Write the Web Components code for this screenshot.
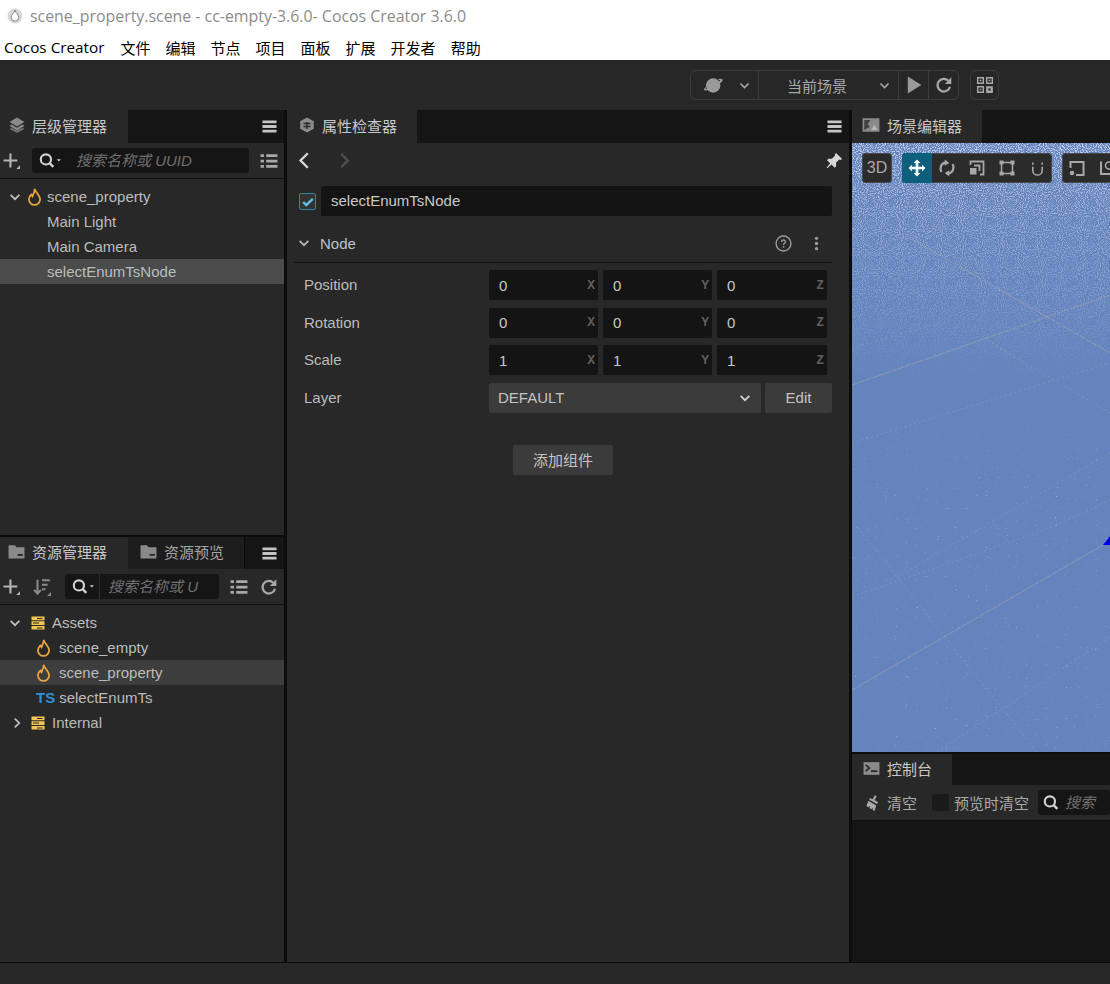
<!DOCTYPE html>
<html lang="zh">
<head>
<meta charset="utf-8">
<title>scene_property.scene - cc-empty-3.6.0- Cocos Creator 3.6.0</title>
<style>
  html, body { margin: 0; height: 100%; overflow: hidden; background: #282828; }
  body { font: 15px "Liberation Sans", "Noto Sans CJK SC", sans-serif; color: #c6c6c6; }
  cocos-app { width: 1110px; height: 984px; }
</style>
</head>
<body>
<cocos-app></cocos-app>

<script>
// icon shapes, all on a 16 unit box
const ICONS = {
  layers: '<path fill="currentColor" d="M8 .5 15.5 5 8 9.5.5 5z"/><path fill="currentColor" d="M2.6 7.6.5 9 8 13.5 15.5 9l-2.1-1.4L8 10.8z"/><path fill="currentColor" d="M2.6 11 .5 12 8 15.8 15.5 12l-2.1-1L8 13.8z" opacity=".8"/>',
  cube: '<path fill="currentColor" d="M8 .5l6.8 3.8v7.4L8 15.5 1.2 11.7V4.3z"/><path fill="none" stroke="#282828" stroke-width="1.3" d="M8 5v7M4.500 6.500h7M4.500 9.500h7"/>',
  menu: '<path fill="currentColor" d="M.5 1.5h15v3H.5zM.5 6.5h15v3H.5zM.5 11.5h15v3H.5z"/>',
  plus: '<path fill="none" stroke="currentColor" stroke-width="2" d="M7 1.5v13M.5 8h13"/><path fill="currentColor" d="M16 12.5V16h-3.5z"/>',
  search: '<circle cx="6.500" cy="7" r="4.800" fill="none" stroke="currentColor" stroke-width="2"/><path stroke="currentColor" stroke-width="2.200" d="M10 10.500l3.500 3.500"/>',
  caret: '<path fill="currentColor" d="M2 5h9L6.500 10z"/>',
  list: '<path fill="currentColor" d="M.5 2h3v2.500h-3zM5.500 2h10v2.500h-10zM.5 6.800h3v2.500h-3zM5.500 6.800h10v2.500h-10zM.5 11.500h3V14h-3zM5.500 11.500h10V14h-10z"/>',
  down: '<path fill="none" stroke="currentColor" stroke-width="2" d="M3 5.500l5 5 5-5"/>',
  right: '<path fill="none" stroke="currentColor" stroke-width="2" d="M5.500 3l5 5-5 5"/>',
  back: '<path fill="none" stroke="currentColor" stroke-width="1.800" d="M10.500 2.500 5 8l5.500 5.500"/>',
  flame: '<path fill="none" stroke="currentColor" stroke-width="1.500" d="M8.200 1.500c.2 2.800 4.500 5.300 4.500 8.900a4.700 4.700 0 0 1-9.400 0c0-1.900 1-3.200 2.100-4.100l.9 1.500c1-1.900 2-3.800 1.900-6.300z"/>',
  folder: '<path fill="currentColor" d="M.5 2h6L8 4h7.500v10.500H.5z"/><path fill="#2a2a2a" d="M9 10.300h5v1.800H9z"/>',
  db: '<path fill="currentColor" d="M1.500 1.500h13v3.700h-13zM1.500 6.200h13v3.700h-13zM1.500 10.900h13v3.700h-13z"/><path fill="#282828" d="M7 3h5.500v1H7zM3 7.600h6v1H3zM7 12.400h5.500v1H7z"/>',
  sort: '<path fill="none" stroke="currentColor" stroke-width="1.800" d="M4 1.500V14M1 10.500 4 14l3-3.500M8 2h7M8 6h5M8 10h3"/><path fill="currentColor" d="M16 12.500V16h-3.500z"/>',
  refresh: '<path fill="none" stroke="currentColor" stroke-width="2" d="M13.300 9.500a5.600 5.600 0 1 1-1.500-5.300"/><path fill="currentColor" d="M14.500 1v6H8.800z"/>',
  pin: '<path fill="currentColor" d="M9.800.8 15.200 6.200l-1.500.8-1-.3-2.900 2.900.1 3-1.300 1.300-2.800-2.800L2 14.400l-.6-.4 3.200-3.900-2.800-2.800 1.300-1.300 3 .1 2.900-2.900-.2-1z"/>',
  help: '<circle cx="8" cy="8" r="7" fill="none" stroke="currentColor" stroke-width="1.300"/><path fill="none" stroke="currentColor" stroke-width="1.300" d="M6.200 6.500c0-2.300 3.600-2.300 3.600-.2 0 1.400-1.800 1.400-1.800 3"/><path fill="currentColor" d="M7.300 10.600h1.400V12H7.300z"/>',
  dots: '<circle cx="8" cy="2.500" r="1.800" fill="currentColor"/><circle cx="8" cy="8" r="1.800" fill="currentColor"/><circle cx="8" cy="13.500" r="1.800" fill="currentColor"/>',
  check: '<path fill="none" stroke="currentColor" stroke-width="2.800" d="M2.500 8l3.500 3.500L13.500 4.500"/>',
  planet: '<circle cx="8.500" cy="8" r="5.500" fill="currentColor"/><path fill="currentColor" d="M15.800 3.200c.6 1-2 3.500-6 5.800s-7.600 3.400-8.200 2.400c-.3-.5.2-1.300 1.200-2.300l.3.800c-.3.300-.4.500-.3.600.3.500 3-.5 6-2.300s5.100-3.700 4.800-4.200c0-.1-.3-.2-.7-.1l-.8-.6c1.400-.4 2.400-.5 2.700-.1z"/>',
  play: '<path fill="currentColor" d="M2.500 .5 14.500 8l-12 7.500z"/>',
  qr: '<path fill="none" stroke="currentColor" stroke-width="1.300" d="M1.500 1.500h5v5h-5zM9.500 1.500h5v5h-5zM1.500 9.500h5v5h-5z"/><path fill="currentColor" d="M3.300 3.300h1.400v1.400H3.300zM11.300 3.300h1.400v1.400h-1.400zM3.300 11.300h1.400v1.400H3.300zM9 9h6v6H9z"/><path fill="#272727" d="M11 11h2v2h-2z"/>',
  scene: '<path fill="currentColor" d="M.5 2h15v12H.5z"/><path fill="#282828" d="M2 3.500h5.500L5 7l2 2.500-5 3z" opacity=".75"/><path fill="#d0d0d0" d="M8 12.500l3-5 3 5z" opacity=".6"/>',
  console: '<path fill="currentColor" d="M.5 2h15v12H.5z"/><path fill="none" stroke="#282828" stroke-width="1.500" d="M2.500 4.500 6 7.500l-3.500 3M7.500 10.500h6"/>',
  broom: '<path fill="currentColor" d="M10.500 1l1.700 1-2 3.300 3.300 2-1 1.500L5.500 5l1-1.500 2 1.200zM4.800 6l7 4.200-1.500 4.800-1.800-1 .2-2-1.300 1.500-1.600-1 .5-1.800-1.500 1-1.800-1.100z"/>',
  move: '<path fill="currentColor" d="M8 .5l3 3H9.200v3.300h3.300V5l3 3-3 3v-1.800H9.200v3.300H11l-3 3-3-3h1.800V9.200H3.500V11l-3-3 3-3v1.800h3.300V3.500H5z"/>',
  rotate: '<path fill="none" stroke="currentColor" stroke-width="2" d="M3 11.500C1 8 3 3.500 7 3M13 4.500c2 3.500 0 8-4 8.500"/><path fill="currentColor" d="M6 .5l4 3-4 2.500zM10 15.500l-4-3 4-2.500z"/>',
  scale: '<path fill="none" stroke="currentColor" stroke-width="1.800" d="M1.500 5V1.500h13v13H11M5 5.500h5.500V11"/><path fill="currentColor" d="M1 8h6.500v6.500H1z"/>',
  rect: '<path fill="none" stroke="currentColor" stroke-width="1.500" d="M2.500 2.500h11v11h-11z"/><path fill="currentColor" d="M.5.500h4v4h-4zM11.500.500h4v4h-4zM.5 11.500h4v4h-4zM11.500 11.500h4v4h-4z"/>',
  magnet: '<path fill="none" stroke="currentColor" stroke-width="1.700" d="M3 6v4a5 5 0 0 0 10 0V6M3 1.500v2.500M13 1.500v2.500"/>',
  anchor: '<path fill="none" stroke="currentColor" stroke-width="2" d="M1.500 8V2h13v13H7"/><circle cx="3" cy="13" r="2.300" fill="currentColor"/>',
  local: '<path fill="none" stroke="currentColor" stroke-width="2" d="M2 1.500V14h13"/><circle cx="10" cy="5.500" r="3.500" fill="none" stroke="currentColor" stroke-width="1.500"/>',
  logo: '<circle cx="8" cy="8" r="7.500" fill="#d8d8d8"/><path fill="#fff" stroke="#8a8a8a" d="M8 2c.5 3 3.800 4.600 3.800 7.400a3.800 3.800 0 0 1-7.600 0C4.200 6.600 7.500 5 8 2z"/>'
};

// small helper so every element sets up its shadow root the same way
function shadow(el, html) {
  el.attachShadow({ mode: 'open' });
  el.shadowRoot.innerHTML = html;
}

class UiIcon extends HTMLElement {
  connectedCallback() {
    const size = this.getAttribute('size') || 16;
    const color = this.getAttribute('color') || '#a8a8a8';
    shadow(this, `
      <style>
        :host { display: inline-flex; flex: none; width: ${size}px; height: ${size}px; color: ${color}; }
        svg { width: 100%; height: 100%; display: block; overflow: visible; }
      </style>
      <svg viewBox="0 0 16 16">${ICONS[this.getAttribute('name')] || ''}</svg>`);
  }
}

class TitleBar extends HTMLElement {
  connectedCallback() {
    shadow(this, `
      <style>
        :host { display: block; background: #fff; color: #000; }
        .title { height: 30px; display: flex; align-items: center; gap: 7px; padding: 2px 0 0 7px; box-sizing: border-box; color: #8c8c8c; font: 15.9px "Open Sans", sans-serif; }
        .menu { height: 30px; display: flex; align-items: center; gap: 15px; padding: 4px 0 0 4px; box-sizing: border-box; font: 15px "Open Sans", "Noto Sans CJK SC", sans-serif; }
        .app { font-size: 15.3px; margin-right: 1px; }
      </style>
      <div class="title"><ui-icon name="logo"></ui-icon><span>scene_property.scene - cc-empty-3.6.0- Cocos Creator 3.6.0</span></div>
      <div class="menu">
        <span class="app">Cocos Creator</span><span>文件</span><span>编辑</span><span>节点</span><span>项目</span><span>面板</span><span>扩展</span><span>开发者</span><span>帮助</span>
      </div>`);
  }
}

class MainToolbar extends HTMLElement {
  connectedCallback() {
    shadow(this, `
      <style>
        :host { display: flex; height: 50px; box-sizing: border-box; padding: 10px 0 10px 690px; gap: 11px; background: #272727; font-size: 15px; color: #a9a9a9; }
        .group { display: flex; height: 30px; box-sizing: border-box; border: 1px solid #3c3c3c; border-radius: 6px; }
        .seg { display: flex; align-items: center; justify-content: center; box-sizing: border-box; border-left: 1px solid #3c3c3c; height: 100%; }
        .seg:first-child { border-left: 0; }
        .planet { width: 67px; gap: 15px; padding-left: 11px; justify-content: flex-start; }
        .current { width: 140px; padding: 0 7px 0 28px; justify-content: space-between; }
        .btn { width: 30px; }
        .qr { width: 27px; }
      </style>
      <div class="group">
        <div class="seg planet"><ui-icon name="planet" size="21" color="#9a9a9a"></ui-icon><ui-icon name="down" size="13"></ui-icon></div>
        <div class="seg current"><span>当前场景</span><ui-icon name="down" size="13"></ui-icon></div>
        <div class="seg btn"><ui-icon name="play" size="18" color="#9a9a9a"></ui-icon></div>
        <div class="seg btn"><ui-icon name="refresh" size="18"></ui-icon></div>
      </div>
      <div class="group"><div class="seg qr"><ui-icon name="qr" size="18"></ui-icon></div></div>`);
  }
}

class DockPanel extends HTMLElement {
  connectedCallback() {
    const bar = this.getAttribute('bar') || 33;
    const menu = this.hasAttribute('menu') ? '<ui-icon class="menu" name="menu" size="15" color="#c4c4c4"></ui-icon>' : '';
    shadow(this, `
      <style>
        :host { display: flex; flex-direction: column; min-height: 0; min-width: 0; background: #282828; overflow: hidden; }
        .bar { display: flex; flex: none; height: ${bar}px; background: #151515; align-items: stretch; }
        .bar slot { display: flex; }
        .menu { margin: auto 7px auto auto; }
        .body { flex: 1; min-height: 0; display: flex; flex-direction: column; }
      </style>
      <div class="bar"><slot name="tabs"></slot>${menu}</div>
      <div class="body"><slot></slot></div>`);
  }
}

class DockTab extends HTMLElement {
  connectedCallback() {
    const dim = this.hasAttribute('dim');
    shadow(this, `
      <style>
        :host { display: flex; align-items: center; box-sizing: border-box; gap: 7px; padding: 0 0 3px ${this.getAttribute('pad') || 8}px; font-size: 15px;
          width: ${this.getAttribute('width')}px; background: ${dim ? '#1d1d1d' : '#282828'}; color: ${dim ? '#a4a4a4' : '#c8c8c8'};
          ${dim ? 'border-right: 1px solid #0c0c0c;' : ''} }
      </style>
      <ui-icon name="${this.getAttribute('icon')}" size="${this.getAttribute('icon-size') || 17}" color="#8a8a8a"></ui-icon><slot></slot>`);
  }
}

class PanelTools extends HTMLElement {
  connectedCallback() {
    const line = this.hasAttribute('line');
    shadow(this, `
      <style>
        :host { display: flex; flex: none; align-items: center; box-sizing: border-box; height: ${line ? 36 : 35}px; padding: 0 7px 0 3px;
          ${line ? 'border-bottom: 1px solid #121212;' : ''} overflow: hidden; }
      </style>
      <slot></slot>`);
  }
}

class SearchBox extends HTMLElement {
  connectedCallback() {
    const split = this.hasAttribute('split');
    const compact = this.hasAttribute('compact');
    const lens = compact ? 'width: 20px; padding-left: 5px;' : `width: ${split ? 35 : 36}px; padding-left: 7px;`;
    shadow(this, `
      <style>
        :host { display: flex; flex: none; align-items: center; box-sizing: border-box; height: 25px; background: #151515; border-radius: 3px; width: ${this.getAttribute('width')}px; overflow: hidden; font-size: 15px; color: #6f6f6f; }
        .lens { display: flex; flex: none; align-items: center; box-sizing: border-box; height: 100%; ${lens} ${split ? 'border-right: 1px solid #2d2d2d;' : ''} }
        .hint { font-style: italic; padding: 0 0 2px ${compact ? 7 : 8}px; white-space: nowrap; }
      </style>
      <div class="lens"><ui-icon name="search" size="17" color="#d2d2d2"></ui-icon>${compact ? '' : '<ui-icon name="caret" size="7" color="#d2d2d2"></ui-icon>'}</div>
      <span class="hint"><slot></slot></span>`);
  }
}

class TreeItem extends HTMLElement {
  connectedCallback() {
    const arrow = this.getAttribute('arrow');
    const icon = this.getAttribute('icon');
    const color = this.getAttribute('color') || '#e8a53f';
    const pad = this.getAttribute('pad') || 8;
    const sel = this.getAttribute('selected');
    const iconSize = icon === 'flame' ? 19 : 16;
    shadow(this, `
      <style>
        :host { display: flex; align-items: center; box-sizing: border-box; height: 25px; padding-left: ${pad}px; color: #bcbcbc; ${sel ? `background: ${sel};` : ''} }
        .icon { margin-left: ${this.getAttribute('icon-gap') || 0}px; margin-right: ${this.getAttribute('label-gap') || 0}px; display: flex; }
      </style>
      ${arrow ? `<ui-icon name="${arrow}" size="14" color="#c0c0c0"></ui-icon>` : ''}
      <div class="icon"><slot name="icon">${icon ? `<ui-icon name="${icon}" size="${iconSize}" color="${color}"></ui-icon>` : ''}</slot></div>
      <slot></slot>`);
  }
}

class VecField extends HTMLElement {
  connectedCallback() {
    shadow(this, `
      <style>
        :host { display: flex; align-items: center; justify-content: space-between; box-sizing: border-box; height: 30px; background: #141414; border-radius: 2px; padding: 0 3px 0 10px; color: #c8c8c8; }
        i { font: bold 13px "Liberation Mono", monospace; font-style: normal; color: #5f5f5f; }
      </style>
      <slot></slot><i>${this.getAttribute('axis')}</i>`);
  }
}

class PropRow extends HTMLElement {
  connectedCallback() {
    shadow(this, `
      <style>
        :host { display: grid; grid-template-columns: 185px 1fr; align-items: center; padding-left: 10px; height: 30px; color: #bcbcbc; }
        .value { display: grid; grid-template-columns: ${this.getAttribute('cols') || '109px 109px 110px'}; gap: ${this.getAttribute('gap') || 5}px; }
        span { padding-bottom: 1px; }
      </style>
      <span>${this.getAttribute('label')}</span><div class="value"><slot></slot></div>`);
  }
}

class PlainButton extends HTMLElement {
  connectedCallback() {
    shadow(this, `
      <style>
        :host { display: flex; align-items: center; justify-content: center; box-sizing: border-box; height: 30px; background: #3b3b3b; border-radius: 2px; color: #c4c4c4; }
      </style>
      <slot></slot>`);
  }
}

class SelectBox extends HTMLElement {
  connectedCallback() {
    shadow(this, `
      <style>
        :host { display: flex; align-items: center; justify-content: space-between; box-sizing: border-box; height: 30px; background: #3b3b3b; border-radius: 2px; padding: 0 9px; color: #c4c4c4; }
      </style>
      <slot></slot><ui-icon name="down" size="14" color="#d0d0d0"></ui-icon>`);
  }
}

class InspectorPanel extends HTMLElement {
  connectedCallback() {
    shadow(this, `
      <style>
        :host { display: flex; flex-direction: column; flex: 1; }
        .tools { display: flex; align-items: center; justify-content: space-between; height: 35px; padding: 0 6px 0 7px; }
        .nav { display: flex; gap: 19px; }
        .main { padding: 8px 17px 0 7px; }
        .name { display: flex; align-items: center; gap: 5px; padding-left: 5px; }
        .check { flex: none; width: 17px; height: 17px; box-sizing: border-box; border: 1px solid #2b87a8; border-radius: 2px; background: #333; display: flex; align-items: center; justify-content: center; margin-top: 1px; }
        .text { flex: 1; height: 30px; box-sizing: border-box; padding: 0 0 1px 10px; display: flex; align-items: center; background: #141414; border-radius: 2px; color: #cacaca; }
        .head { display: flex; align-items: center; height: 47px; box-sizing: border-box; border-bottom: 1px solid #121212; padding: 8px 0 0 3px; gap: 9px; color: #bcc4cc; }
        .head span { flex: 1; }
        .head .end { display: flex; gap: 17px; padding-right: 8px; align-items: center; }
        .rows { display: grid; gap: 7.5px; margin-top: 7px; }
        .add { display: flex; justify-content: center; margin-top: 32px; }
        .add plain-button { width: 100px; font-size: 15px; padding-bottom: 1px; }
      </style>
      <div class="tools">
        <div class="nav"><ui-icon name="back" size="21" color="#d8d8d8"></ui-icon><ui-icon name="right" size="21" color="#4c4c4c"></ui-icon></div>
        <ui-icon name="pin" size="18" color="#d8d8d8"></ui-icon>
      </div>
      <div class="main">
        <div class="name">
          <div class="check"><ui-icon name="check" size="14" color="#5ec0e6"></ui-icon></div>
          <div class="text">selectEnumTsNode</div>
        </div>
        <div class="head">
          <ui-icon name="down" size="14" color="#b8b8b8"></ui-icon><span>Node</span>
          <div class="end"><ui-icon name="help" size="17" color="#9a9a9a"></ui-icon><ui-icon name="dots" size="15" color="#9a9a9a"></ui-icon></div>
        </div>
        <div class="rows">
          <prop-row label="Position"><vec-field axis="X">0</vec-field><vec-field axis="Y">0</vec-field><vec-field axis="Z">0</vec-field></prop-row>
          <prop-row label="Rotation"><vec-field axis="X">0</vec-field><vec-field axis="Y">0</vec-field><vec-field axis="Z">0</vec-field></prop-row>
          <prop-row label="Scale"><vec-field axis="X">1</vec-field><vec-field axis="Y">1</vec-field><vec-field axis="Z">1</vec-field></prop-row>
          <prop-row label="Layer" cols="272px 67px" gap="4"><select-box>DEFAULT</select-box><plain-button>Edit</plain-button></prop-row>
        </div>
        <div class="add"><plain-button>添加组件</plain-button></div>
      </div>`);
  }
}

class ToolBtn extends HTMLElement {
  connectedCallback() {
    const active = this.hasAttribute('active');
    shadow(this, `
      <style>
        :host { display: flex; flex: none; align-items: center; justify-content: center; width: 30px; height: 30px; box-sizing: border-box; color: #a8a8a8; ${active ? 'background: #0e5f7c;' : ''} }
      </style>
      <slot></slot>`);
  }
}

class SceneView extends HTMLElement {
  connectedCallback() {
    // grid lines as seen in the viewport, coordinates are local to this box
    const major = [[0,242,258,152],[58,95,258,210],[0,547,251,402]];
    const minor = [[0,112,258,22],[0,205,91,179],[11,114,181,227],[5,384,93,494],[93,494,185,609],[0,454,198,385],[198,385,258,357],[85,609,258,494],[45,434,258,310],[140,200,258,270],[0,300,258,220]];
    const line = (l, s, o, w, d) => `<line x1="${l[0]}" y1="${l[1]}" x2="${l[2]}" y2="${l[3]}" stroke="${s}" stroke-opacity="${o}" stroke-width="${w}" stroke-dasharray="${d}"/>`;
    shadow(this, `
      <style>
        :host { display: block; position: relative; flex: none; height: 609px; background: #6584be; overflow: hidden; }
        svg { position: absolute; inset: 0; width: 100%; height: 100%; }
        .tools { position: relative; display: flex; gap: 10px; padding: 10px 0 0 10px; white-space: nowrap; }
        .box { display: flex; flex: none; height: 30px; background: #2b2b2b; border-radius: 4px; box-shadow: inset 0 0 0 1px #4a4a4a; overflow: hidden; }
        .label { font-size: 16px; color: #a8a8a8; }
      </style>
      <svg viewBox="0 0 258 609" preserveAspectRatio="none">
        <defs>
          <linearGradient id="fade" x1="0" y1="0" x2="0" y2="1"><stop offset="0" stop-color="#ddd"/><stop offset=".12" stop-color="#777"/><stop offset=".4" stop-color="#000"/></linearGradient>
          <linearGradient id="fade2" x1="0" y1="0" x2="0" y2="1"><stop offset=".38" stop-color="#000"/><stop offset=".55" stop-color="#fff"/></linearGradient>
          <mask id="top"><rect width="258" height="609" fill="url(#fade)"/></mask>
          <mask id="low"><rect width="258" height="609" fill="url(#fade2)"/></mask>
          <filter id="speck" x="0" y="0" width="100%" height="100%"><feTurbulence type="fractalNoise" baseFrequency=".95" numOctaves="1" seed="4"/><feColorMatrix values="0 0 0 0 .62  0 0 0 0 .71  0 0 0 0 .87  6 0 0 0 -2.800"/></filter>
          <filter id="speck2" x="0" y="0" width="100%" height="100%"><feTurbulence type="fractalNoise" baseFrequency=".9" numOctaves="1" seed="9"/><feColorMatrix values="0 0 0 0 .25  0 0 0 0 .42  0 0 0 0 .78  9 0 0 0 -6.300"/></filter>
        </defs>
        <g mask="url(#top)"><rect width="258" height="609" filter="url(#speck)"/></g>
        <g mask="url(#low)"><rect width="258" height="609" filter="url(#speck2)"/></g>
        ${minor.map(l => line(l, '#99a0b0', .5, 1, '2 3')).join('')}
        ${major.map(l => line(l, '#9a9fa9', .75, 1, '6 1')).join('')}
        <path fill="#0000e6" d="M251 402l7-9v9z"/>
      </svg>
      <div class="tools">
        <div class="box"><tool-btn><span class="label">3D</span></tool-btn></div>
        <div class="box">
          <tool-btn active><ui-icon name="move" size="18" color="#fff"></ui-icon></tool-btn>
          <tool-btn><ui-icon name="rotate" size="18"></ui-icon></tool-btn>
          <tool-btn><ui-icon name="scale" size="16"></ui-icon></tool-btn>
          <tool-btn><ui-icon name="rect" size="16"></ui-icon></tool-btn>
          <tool-btn><ui-icon name="magnet" size="15"></ui-icon></tool-btn>
        </div>
        <div class="box">
          <tool-btn><ui-icon name="anchor" size="16"></ui-icon></tool-btn>
          <tool-btn><ui-icon name="local" size="16"></ui-icon></tool-btn>
        </div>
      </div>`);
  }
}

class ConsolePanel extends HTMLElement {
  connectedCallback() {
    shadow(this, `
      <style>
        :host { display: flex; flex-direction: column; flex: 1; min-height: 0; font-size: 15px; color: #a9a9a9; }
        .tools { display: flex; flex: none; align-items: center; height: 36px; box-sizing: border-box; border-bottom: 1px solid #101010; padding-left: 11px; white-space: nowrap; }
        .tools span { padding-bottom: 1px; }
        .clear { margin-left: 6px; }
        .box { flex: none; width: 17px; height: 17px; background: #1a1a1a; border-radius: 3px; margin: 0 5px 0 15px; }
        search-box { margin-left: 9px; }
        .log { flex: 1; background: #151515; }
      </style>
      <div class="tools">
        <ui-icon name="broom" size="18" color="#a8a8a8"></ui-icon><span class="clear">清空</span>
        <div class="box"></div><span>预览时清空</span>
        <search-box width="72" compact>搜索</search-box>
      </div>
      <div class="log"></div>`);
  }
}

class CocosApp extends HTMLElement {
  connectedCallback() {
    shadow(this, `
      <style>
        :host { display: flex; flex-direction: column; background: #0c0c0c; }
        .dock { flex: none; height: 852px; display: flex; gap: 3px; background: #0c0c0c; }
        .left { width: 284px; flex: none; display: flex; flex-direction: column; gap: 2px; }
        .left dock-panel { flex: none; }
        .mid { width: 562px; flex: none; display: flex; }
        .mid dock-panel { flex: 1; }
        .right { flex: 1; min-width: 0; display: flex; }
        .right dock-panel { flex: 1; }
        .status { flex: none; height: 21px; margin-top: 1px; background: #282828; }
        .bar { flex: none; height: 2px; background: #0c0c0c; }
        .ts { font: bold 15px "Liberation Sans", sans-serif; color: #2f8fd8; }
        .spacer { height: 5px; flex: none; }
      </style>
      <title-bar></title-bar>
      <main-toolbar></main-toolbar>
      <div class="dock">
        <div class="left">
          <dock-panel menu style="height:425px">
            <dock-tab slot="tabs" icon="layers" width="128" pad="9" icon-size="16">层级管理器</dock-tab>
            <panel-tools line>
              <ui-icon name="plus" size="17" color="#b4b4b4"></ui-icon>
              <search-box width="217" style="margin-left:12px">搜索名称或 UUID</search-box>
              <ui-icon name="list" size="18" color="#a8a8a8" style="margin-left:11px"></ui-icon>
            </panel-tools>
            <div class="spacer"></div>
            <tree-item arrow="down" icon="flame" icon-gap="3" label-gap="3">scene_property</tree-item>
            <tree-item pad="47">Main Light</tree-item>
            <tree-item pad="47">Main Camera</tree-item>
            <tree-item pad="47" selected="#4b4b4b">selectEnumTsNode</tree-item>
          </dock-panel>
          <dock-panel menu bar="32" style="height:425px">
            <dock-tab slot="tabs" icon="folder" width="128" icon-size="17">资源管理器</dock-tab>
            <dock-tab slot="tabs" icon="folder" width="117" pad="12" icon-size="17" dim>资源预览</dock-tab>
            <panel-tools line>
              <ui-icon name="plus" size="17" color="#b4b4b4"></ui-icon>
              <ui-icon name="sort" size="18" color="#8a8a8a" style="margin-left:13px"></ui-icon>
              <search-box width="154" split style="margin-left:14px">搜索名称或 U</search-box>
              <ui-icon name="list" size="18" color="#a8a8a8" style="margin-left:11px"></ui-icon>
              <ui-icon name="refresh" size="18" color="#a8a8a8" style="margin-left:12px"></ui-icon>
            </panel-tools>
            <div class="spacer"></div>
            <tree-item arrow="down" icon="db" color="#f4c653" icon-gap="8" label-gap="6">Assets</tree-item>
            <tree-item pad="34" icon="flame" label-gap="6">scene_empty</tree-item>
            <tree-item pad="34" icon="flame" label-gap="6" selected="#3d3d3d">scene_property</tree-item>
            <tree-item pad="36"><span slot="icon" class="ts">TS</span><span style="margin-left:4px">selectEnumTs</span></tree-item>
            <tree-item arrow="right" pad="10" icon="db" color="#f4c653" icon-gap="6" label-gap="6">Internal</tree-item>
          </dock-panel>
        </div>
        <div class="mid">
          <dock-panel menu>
            <dock-tab slot="tabs" icon="cube" width="130" pad="12" icon-size="16">属性检查器</dock-tab>
            <inspector-panel></inspector-panel>
          </dock-panel>
        </div>
        <div class="right">
          <dock-panel>
            <dock-tab slot="tabs" icon="scene" width="130" pad="10" icon-size="18">场景编辑器</dock-tab>
            <scene-view></scene-view>
            <div class="bar"></div>
            <dock-panel bar="31" style="flex:1">
              <dock-tab slot="tabs" icon="console" width="100" pad="11">控制台</dock-tab>
              <console-panel></console-panel>
            </dock-panel>
          </dock-panel>
        </div>
      </div>
      <div class="status"></div>`);
  }
}

customElements.define('ui-icon', UiIcon);
customElements.define('title-bar', TitleBar);
customElements.define('main-toolbar', MainToolbar);
customElements.define('dock-panel', DockPanel);
customElements.define('dock-tab', DockTab);
customElements.define('panel-tools', PanelTools);
customElements.define('search-box', SearchBox);
customElements.define('tree-item', TreeItem);
customElements.define('vec-field', VecField);
customElements.define('prop-row', PropRow);
customElements.define('plain-button', PlainButton);
customElements.define('select-box', SelectBox);
customElements.define('inspector-panel', InspectorPanel);
customElements.define('tool-btn', ToolBtn);
customElements.define('scene-view', SceneView);
customElements.define('console-panel', ConsolePanel);
customElements.define('cocos-app', CocosApp);
</script>
</body>
</html>
